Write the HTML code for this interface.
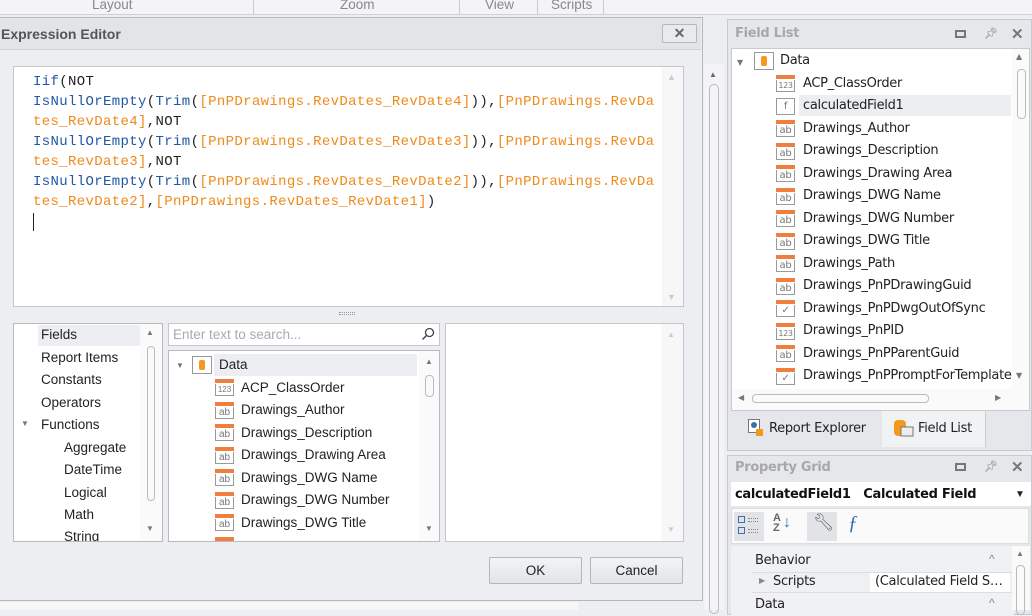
<!DOCTYPE html>
<html><head><meta charset="utf-8"><style>
*{margin:0;padding:0;box-sizing:border-box}
body{width:1032px;height:610px;overflow:hidden;background:#eceef2;font-family:"Liberation Sans",sans-serif;font-size:13.5px;color:#222;position:relative}
.a{position:absolute}
.code{font-family:"Liberation Mono",monospace;font-size:14px;letter-spacing:0.35px;line-height:20px;white-space:pre;color:#222}
.b{color:#1f58a6}.o{color:#ef8a1a}
.ic{position:absolute;width:19px;height:17px;border:1px solid #9a9a9a;background:#fff;font-size:10px;line-height:11px;text-align:center;color:#777;padding-top:4px}
.ic:before{content:"";position:absolute;left:-1px;right:-1px;top:-1px;height:4px;background:#f07e3e;border-bottom:1px solid #fff}
.ic.f:before{display:none}
.ic.f{padding-top:2px}
.db{position:absolute;width:20px;height:18px;border:1px solid #999;background:#fff}
.db:after{content:"";position:absolute;left:6px;top:3px;width:6px;height:10px;background:#f39a1e;border-radius:2px}
.rt{font-family:"DejaVu Sans",sans-serif;font-size:13px;letter-spacing:-0.3px}
</style></head><body>
<div class="a" style="left:0;top:0;width:1032px;height:15px;background:#f4f4f6;border-bottom:1px solid #d0d2d6"></div>
<div class="a" style="left:92px;top:-3px;color:#888">Layout</div>
<div class="a" style="left:340px;top:-3px;color:#888">Zoom</div>
<div class="a" style="left:485px;top:-3px;color:#888">View</div>
<div class="a" style="left:551px;top:-3px;color:#888">Scripts</div>
<div class="a" style="left:253px;top:0;width:1px;height:15px;background:#ccc"></div>
<div class="a" style="left:459px;top:0;width:1px;height:15px;background:#ccc"></div>
<div class="a" style="left:537px;top:0;width:1px;height:15px;background:#ccc"></div>
<div class="a" style="left:603px;top:0;width:1px;height:15px;background:#ccc"></div>

<div class="a" style="left:0;top:17px;width:703px;height:584px;background:#eceef2;border:1px solid #b4b6bb;border-left:none"></div>
<div class="a" style="left:0;top:18px;width:701px;height:32px;background:#e2e4e8;border-bottom:1px solid #cfd1d5"></div>
<div class="a" style="left:1px;top:26px;font-weight:bold;font-size:14px;color:#555">Expression Editor</div>
<div class="a" style="left:662px;top:24px;width:35px;height:19px;border:1px solid #b8b8bc;border-radius:2px;background:#e9eaee;text-align:center;font-weight:bold;color:#666;line-height:17px;font-size:14px">✕</div>

<div class="a" style="left:13px;top:66px;width:671px;height:241px;background:#fff;border:1px solid #c5c7cc"></div>
<div class="a" style="left:662px;top:67px;width:21px;height:239px;background:#f7f7f8"></div>
<div class="a" style="left:667px;top:72px;color:#ccc;font-size:9px">▲</div>
<div class="a" style="left:667px;top:292px;color:#ccc;font-size:9px">▼</div>
<div class="a code" style="left:33px;top:72px"><span class="b">Iif</span>(NOT
<span class="b">IsNullOrEmpty</span>(<span class="b">Trim</span>(<span class="o">[PnPDrawings.RevDates_RevDate4]</span>)),<span class="o">[PnPDrawings.RevDa
tes_RevDate4]</span>,NOT
<span class="b">IsNullOrEmpty</span>(<span class="b">Trim</span>(<span class="o">[PnPDrawings.RevDates_RevDate3]</span>)),<span class="o">[PnPDrawings.RevDa
tes_RevDate3]</span>,NOT
<span class="b">IsNullOrEmpty</span>(<span class="b">Trim</span>(<span class="o">[PnPDrawings.RevDates_RevDate2]</span>)),<span class="o">[PnPDrawings.RevDa
tes_RevDate2]</span>,<span class="o">[PnPDrawings.RevDates_RevDate1]</span>)</div>
<div class="a" style="left:33px;top:213px;width:1px;height:18px;background:#222"></div>
<div class="a" style="left:339px;top:312px;width:16px;height:3px;border-top:1px dotted #999;border-bottom:1px dotted #999"></div>

<div class="a" style="left:13px;top:323px;width:150px;height:219px;background:#fff;border:1px solid #b8bac0;overflow:hidden">
 <div class="a" style="left:24px;top:1px;width:116px;height:21px;background:#eceef2"></div>
 <div class="a" style="left:27px;top:3px">Fields</div>
 <div class="a" style="left:27px;top:26px">Report Items</div>
 <div class="a" style="left:27px;top:48px">Constants</div>
 <div class="a" style="left:27px;top:71px">Operators</div>
 <div class="a" style="left:7px;top:95px;font-size:8px;color:#777">▼</div>
 <div class="a" style="left:27px;top:93px">Functions</div>
 <div class="a" style="left:50px;top:116px">Aggregate</div>
 <div class="a" style="left:50px;top:138px">DateTime</div>
 <div class="a" style="left:50px;top:161px">Logical</div>
 <div class="a" style="left:50px;top:183px">Math</div>
 <div class="a" style="left:50px;top:205px">String</div>
 <div class="a" style="left:126px;top:0;width:22px;height:218px;background:#fafafa"></div>
 <div class="a" style="left:132px;top:4px;font-size:8px;color:#777">▲</div>
 <div class="a" style="left:133px;top:22px;width:8px;height:155px;border:1px solid #bbb;border-radius:4px"></div>
 <div class="a" style="left:132px;top:200px;font-size:8px;color:#777">▼</div>
</div>
<div class="a" style="left:168px;top:323px;width:272px;height:23px;background:#fff;border:1px solid #c5c7cc"></div>
<div class="a" style="left:173px;top:327px;color:#aaa">Enter text to search...</div>
<svg class="a" style="left:421px;top:327px" width="14" height="14"><circle cx="8.5" cy="5.5" r="4" fill="none" stroke="#444" stroke-width="1.3"/><line x1="5.5" y1="8.5" x2="1.5" y2="12.5" stroke="#444" stroke-width="1.5"/></svg>
<div class="a" style="left:168px;top:350px;width:272px;height:192px;background:#fff;border:1px solid #b8bac0;overflow:hidden">
 <div class="a" style="left:45px;top:3px;width:203px;height:22px;background:#eceef2"></div>
 <div class="a" style="left:7px;top:10px;font-size:8px;color:#777">▼</div>
 <div class="db" style="left:23px;top:5px"></div>
 <div class="a" style="left:50px;top:6px">Data</div>
 <div class="ic" style="left:46px;top:28px;font-size:8px">123</div><div class="a" style="left:72px;top:29px">ACP_ClassOrder</div>
 <div class="ic" style="left:46px;top:51px">ab</div><div class="a" style="left:72px;top:51px">Drawings_Author</div>
 <div class="ic" style="left:46px;top:73px">ab</div><div class="a" style="left:72px;top:74px">Drawings_Description</div>
 <div class="ic" style="left:46px;top:96px">ab</div><div class="a" style="left:72px;top:96px">Drawings_Drawing Area</div>
 <div class="ic" style="left:46px;top:118px">ab</div><div class="a" style="left:72px;top:119px">Drawings_DWG Name</div>
 <div class="ic" style="left:46px;top:141px">ab</div><div class="a" style="left:72px;top:141px">Drawings_DWG Number</div>
 <div class="ic" style="left:46px;top:163px">ab</div><div class="a" style="left:72px;top:164px">Drawings_DWG Title</div>
 <div class="ic" style="left:46px;top:186px">ab</div>
 <div class="a" style="left:250px;top:0;width:21px;height:191px;background:#fafafa"></div>
 <div class="a" style="left:256px;top:6px;font-size:8px;color:#777">▲</div>
 <div class="a" style="left:256px;top:24px;width:9px;height:22px;border:1px solid #bbb;border-radius:4px"></div>
 <div class="a" style="left:256px;top:173px;font-size:8px;color:#777">▼</div>
</div>
<div class="a" style="left:445px;top:323px;width:239px;height:219px;background:#fff;border:1px solid #c5c7cc"></div>
<div class="a" style="left:661px;top:324px;width:22px;height:217px;background:#f7f7f8"></div>
<div class="a" style="left:667px;top:330px;color:#ccc;font-size:8px">▲</div>
<div class="a" style="left:667px;top:525px;color:#ccc;font-size:8px">▼</div>
<div class="a" style="left:489px;top:557px;width:93px;height:27px;border:1px solid #b3b5ba;border-radius:2px;background:linear-gradient(#f3f4f6,#e2e4e8);text-align:center;line-height:25px">OK</div>
<div class="a" style="left:590px;top:557px;width:93px;height:27px;border:1px solid #b3b5ba;border-radius:2px;background:linear-gradient(#f3f4f6,#e2e4e8);text-align:center;line-height:25px">Cancel</div>
<div class="a" style="left:0;top:602px;width:578px;height:8px;background:#f6f6f7"></div>

<div class="a" style="left:704px;top:17px;width:23px;height:593px;background:#eceef2"></div>
<div class="a" style="left:704px;top:64px;width:20px;height:546px;background:#f4f4f6"></div>
<div class="a" style="left:709px;top:70px;font-size:8px;color:#666">▲</div>
<div class="a" style="left:709px;top:84px;width:10px;height:530px;border:1px solid #bbb;border-radius:5px"></div>

<div class="a" style="left:727px;top:19px;width:305px;height:432px;background:#e6e7ea;border:1px solid #c8cacf"></div>
<div class="a rt" style="left:735px;top:26px;font-weight:bold;color:#a8a8ac">Field List</div>
<div class="a" style="left:955px;top:30px;width:11px;height:8px;border:2px solid #777"></div>
<div class="a" style="left:984px;top:27px;font-size:11px;color:#777">📌︎</div>
<div class="a" style="left:1011px;top:25px;font-size:15px;font-weight:bold;color:#777">✕</div>
<div class="a rt" style="left:731px;top:48px;width:299px;height:363px;background:#fff;border:1px solid #c8cacf;overflow:hidden">
 <div class="a" style="left:5px;top:9px;font-size:8px;color:#777">▼</div>
 <div class="db" style="left:22px;top:3px"></div>
 <div class="a" style="left:48px;top:4px">Data</div>
 <div class="a" style="left:67px;top:46px;width:212px;height:21px;background:#eceef2"></div>
 <div class="ic" style="left:44px;top:26px;font-size:8px">123</div><div class="a" style="left:71px;top:27px">ACP_ClassOrder</div>
 <div class="ic f" style="left:44px;top:49px">f</div><div class="a" style="left:71px;top:49px">calculatedField1</div>
 <div class="ic" style="left:44px;top:71px">ab</div><div class="a" style="left:71px;top:72px">Drawings_Author</div>
 <div class="ic" style="left:44px;top:94px">ab</div><div class="a" style="left:71px;top:94px">Drawings_Description</div>
 <div class="ic" style="left:44px;top:116px">ab</div><div class="a" style="left:71px;top:117px">Drawings_Drawing Area</div>
 <div class="ic" style="left:44px;top:139px">ab</div><div class="a" style="left:71px;top:139px">Drawings_DWG Name</div>
 <div class="ic" style="left:44px;top:161px">ab</div><div class="a" style="left:71px;top:162px">Drawings_DWG Number</div>
 <div class="ic" style="left:44px;top:184px">ab</div><div class="a" style="left:71px;top:184px">Drawings_DWG Title</div>
 <div class="ic" style="left:44px;top:206px">ab</div><div class="a" style="left:71px;top:207px">Drawings_Path</div>
 <div class="ic" style="left:44px;top:229px">ab</div><div class="a" style="left:71px;top:229px">Drawings_PnPDrawingGuid</div>
 <div class="ic" style="left:44px;top:251px">✓</div><div class="a" style="left:71px;top:252px">Drawings_PnPDwgOutOfSync</div>
 <div class="ic" style="left:44px;top:274px;font-size:8px">123</div><div class="a" style="left:71px;top:274px">Drawings_PnPID</div>
 <div class="ic" style="left:44px;top:296px">ab</div><div class="a" style="left:71px;top:297px">Drawings_PnPParentGuid</div>
 <div class="ic" style="left:44px;top:319px">✓</div><div class="a" style="left:71px;top:319px">Drawings_PnPPromptForTemplate</div>
 <div class="a" style="left:280px;top:0;width:18px;height:340px;background:#fafafa"></div>
 <div class="a" style="left:284px;top:3px;font-size:8px;color:#777">▲</div>
 <div class="a" style="left:285px;top:20px;width:9px;height:50px;border:1px solid #bbb;border-radius:4px"></div>
 <div class="a" style="left:284px;top:322px;font-size:8px;color:#777">▼</div>
 <div class="a" style="left:0;top:340px;width:298px;height:22px;background:#fafafa"></div>
 <div class="a" style="left:6px;top:344px;font-size:8px;color:#777">◀</div>
 <div class="a" style="left:20px;top:345px;width:177px;height:9px;border:1px solid #bbb;border-radius:4px"></div>
 <div class="a" style="left:263px;top:344px;font-size:8px;color:#777">▶</div>
</div>
<div class="a" style="left:882px;top:411px;width:104px;height:36px;background:#f1f2f4;border-right:1px solid #ccc"></div>
<svg class="a" style="left:748px;top:419px" width="16" height="18"><rect x="0.5" y="0.5" width="11" height="13" fill="#fff" stroke="#777"/><circle cx="6" cy="6" r="3" fill="#3a6fb0"/><rect x="8" y="10" width="7" height="7" fill="#f39a1e"/></svg>
<div class="a rt" style="left:769px;top:421px">Report Explorer</div>
<svg class="a" style="left:894px;top:419px" width="20" height="18"><rect x="0" y="1" width="12" height="16" rx="4" fill="#f39a1e"/><rect x="7" y="8" width="12" height="9" fill="#eee" stroke="#777"/></svg>
<div class="a rt" style="left:918px;top:421px">Field List</div>

<div class="a" style="left:727px;top:455px;width:305px;height:160px;background:#e6e7ea;border:1px solid #c8cacf"></div>
<div class="a rt" style="left:735px;top:460px;font-weight:bold;color:#a8a8ac">Property Grid</div>
<div class="a" style="left:955px;top:463px;width:11px;height:8px;border:2px solid #777"></div>
<div class="a" style="left:984px;top:460px;font-size:11px;color:#777">📌︎</div>
<div class="a" style="left:1011px;top:458px;font-size:15px;font-weight:bold;color:#777">✕</div>
<div class="a" style="left:731px;top:482px;width:300px;height:24px;background:#fff"></div>
<div class="a rt" style="left:735px;top:487px;font-weight:bold;color:#111">calculatedField1 &nbsp; Calculated Field</div>
<div class="a" style="left:1015px;top:489px;font-size:10px">▼</div>
<div class="a" style="left:731px;top:508px;width:298px;height:36px;background:#fafafa;border:1px solid #ddd"></div>
<div class="a" style="left:734px;top:512px;width:30px;height:29px;background:#e2e3e6"></div>
<div class="a" style="left:738px;top:516px;width:7px;height:7px;border:1px solid #3a6fb0"></div>
<div class="a" style="left:738px;top:527px;width:7px;height:7px;border:1px solid #3a6fb0"></div>
<div class="a" style="left:748px;top:518px;width:10px;height:4px;border-top:1px dotted #888;border-bottom:1px dotted #888"></div>
<div class="a" style="left:748px;top:529px;width:10px;height:4px;border-top:1px dotted #888;border-bottom:1px dotted #888"></div>
<div class="a" style="left:773px;top:513px;font-size:11px;line-height:10px;color:#666;font-weight:bold">A<br>Z</div>
<div class="a" style="left:783px;top:514px;color:#3a6fb0;font-size:16px">↓</div>
<div class="a" style="left:807px;top:512px;width:30px;height:29px;background:#e2e3e6"></div>
<div class="a" style="left:813px;top:513px;font-size:17px;color:#666">🔧︎</div>
<div class="a" style="left:848px;top:512px;color:#3a6fb0;font-size:20px;font-style:italic;font-family:'Liberation Serif',serif">ƒ</div>
<div class="a" style="left:731px;top:546px;width:283px;height:70px;background:#f0f1f3"></div>
<div class="a rt" style="left:755px;top:553px">Behavior</div>
<div class="a" style="left:989px;top:552px;color:#888;font-size:12px">^</div>
<div class="a" style="left:752px;top:572px;width:260px;height:21px;background:#eef0f2;border-top:1px solid #ddd;border-bottom:1px solid #ddd"></div>
<div class="a" style="left:870px;top:573px;width:140px;height:19px;background:#fff"></div>
<div class="a" style="left:759px;top:576px;font-size:8px;color:#888">▶</div>
<div class="a rt" style="left:773px;top:574px">Scripts</div>
<div class="a rt" style="left:875px;top:574px">(Calculated Field S…</div>
<div class="a rt" style="left:755px;top:597px">Data</div>
<div class="a" style="left:989px;top:596px;color:#888;font-size:12px">^</div>
<div class="a" style="left:1012px;top:546px;width:18px;height:64px;background:#fafafa"></div>
<div class="a" style="left:1016px;top:549px;font-size:8px;color:#777">▲</div>
<div class="a" style="left:1016px;top:565px;width:9px;height:50px;border:1px solid #bbb;border-radius:4px"></div>
</body></html>
